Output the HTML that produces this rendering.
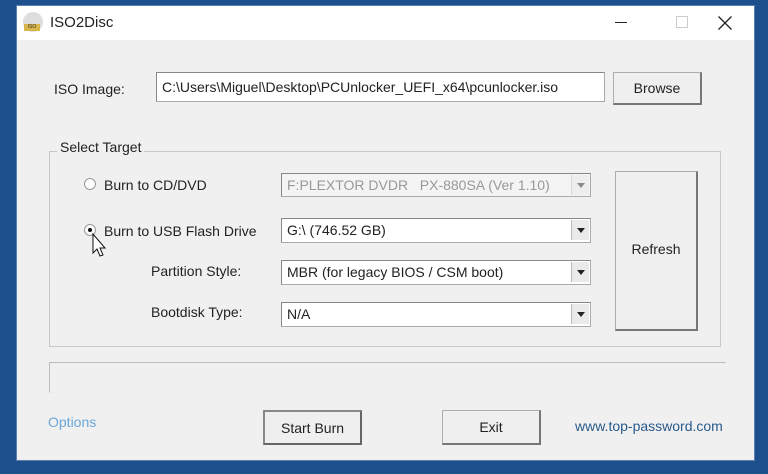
<!DOCTYPE html>
<html><head><meta charset="utf-8"><style>
*{box-sizing:border-box;margin:0;padding:0}
body{width:768px;height:474px;overflow:hidden;background:#1d4f8c;font-family:"Liberation Sans",sans-serif;font-size:14px;color:#222;position:relative}
.a{position:absolute}
#win{left:16px;top:5px;width:739px;height:456px;background:#f0f0f0;border:1px solid #5a7fb0}
#title{left:0;top:0;width:737px;height:34px;background:#fff}
.in{background:#fff;border:1px solid #aaa;border-top-color:#888;border-left-color:#888;padding-left:5px;line-height:22px;white-space:nowrap;overflow:hidden}
.btn{background:#efefef;border:1px solid #adadad;border-right:2px solid #777;border-bottom:2px solid #777;text-align:center}
.dd{width:18px;height:20px;background:#eaeaea;border-left:1px solid #bbb}
.dd:after{content:"";position:absolute;left:5px;top:8px;border:4px solid transparent;border-top:5px solid #222}
.radio{width:12px;height:12px;border-radius:50%;border:1px solid #999;background:#fff}
</style></head><body>
<div id="win" class="a">
 <div id="title" class="a">
  <div class="a" style="left:6px;top:6px;width:20px;height:20px;border-radius:50%;background:#ddd"></div>
  <div class="a" style="left:7px;top:18px;width:16px;height:7px;background:#d9b64a;font-size:5px;color:#333;text-align:center;line-height:7px">ISO</div>
  <div class="a" style="left:33px;top:8px;font-size:15px">ISO2Disc</div>
  <div class="a" style="left:598px;top:16px;width:12px;height:1px;background:#222"></div>
  <div class="a" style="left:659px;top:10px;width:12px;height:12px;border:1px solid #ccc"></div>
  <svg class="a" style="left:701px;top:10px" width="14" height="14"><path d="M0.5 0.5 L13.5 13.5 M13.5 0.5 L0.5 13.5" stroke="#222" stroke-width="1.3"/></svg>
 </div>
 <div class="a" style="left:37px;top:75px">ISO Image:</div>
 <div class="a in" style="left:139px;top:66px;width:449px;height:30px;line-height:28px">C:\Users\Miguel\Desktop\PCUnlocker_UEFI_x64\pcunlocker.iso</div>
 <div class="a btn" style="left:596px;top:66px;width:89px;height:33px;line-height:31px">Browse</div>
 <div class="a" style="left:32px;top:145px;width:672px;height:196px;border:1px solid #c8c8c8"></div>
 <div class="a" style="left:40px;top:133px;background:#f0f0f0;padding:0 3px">Select Target</div>
 <div class="a radio" style="left:67px;top:172px"></div>
 <div class="a" style="left:87px;top:171px">Burn to CD/DVD</div>
 <div class="a in" style="left:264px;top:167px;width:310px;height:24px;color:#999;background:#f4f4f4">F:PLEXTOR DVDR&nbsp;&nbsp; PX-880SA (Ver 1.10)<div class="a dd" style="right:1px;top:1px;opacity:.5"></div></div>
 <div class="a radio" style="left:67px;top:218px"><div class="a" style="left:3px;top:3px;width:4px;height:4px;border-radius:50%;background:#111"></div></div>
 <div class="a" style="left:87px;top:217px">Burn to USB Flash Drive</div>
 <svg class="a" style="left:74px;top:227px" width="16" height="26"><path d="M2 1 L2 20 L6 16 L9 23 L12 22 L9 15 L14 15 Z" fill="#fff" stroke="#111" stroke-width="1"/></svg>
 <div class="a in" style="left:264px;top:212px;width:310px;height:25px">G:\ (746.52 GB)<div class="a dd" style="right:1px;top:1px"></div></div>
 <div class="a" style="left:134px;top:257px">Partition Style:</div>
 <div class="a in" style="left:264px;top:254px;width:310px;height:25px">MBR (for legacy BIOS / CSM boot)<div class="a dd" style="right:1px;top:1px"></div></div>
 <div class="a" style="left:134px;top:298px">Bootdisk Type:</div>
 <div class="a in" style="left:264px;top:296px;width:310px;height:25px">N/A<div class="a dd" style="right:1px;top:1px"></div></div>
 <div class="a btn" style="left:598px;top:165px;width:83px;height:160px;line-height:154px">Refresh</div>
 <div class="a" style="left:32px;top:356px;width:677px;height:31px;border:1px solid #bbb;border-right-color:#eee;border-bottom-color:#eee;background:#f0f0f0"></div>
 <div class="a" style="left:31px;top:408px;color:#6aa6d8">Options</div>
 <div class="a btn" style="left:246px;top:404px;width:99px;height:35px;line-height:33px;border:2px solid #666;border-top-color:#888;border-left-color:#888">Start Burn</div>
 <div class="a btn" style="left:425px;top:404px;width:99px;height:35px;line-height:33px">Exit</div>
 <div class="a" style="left:558px;top:412px;color:#2a5a8c">www.top-password.com</div>
</div>
</body></html>
